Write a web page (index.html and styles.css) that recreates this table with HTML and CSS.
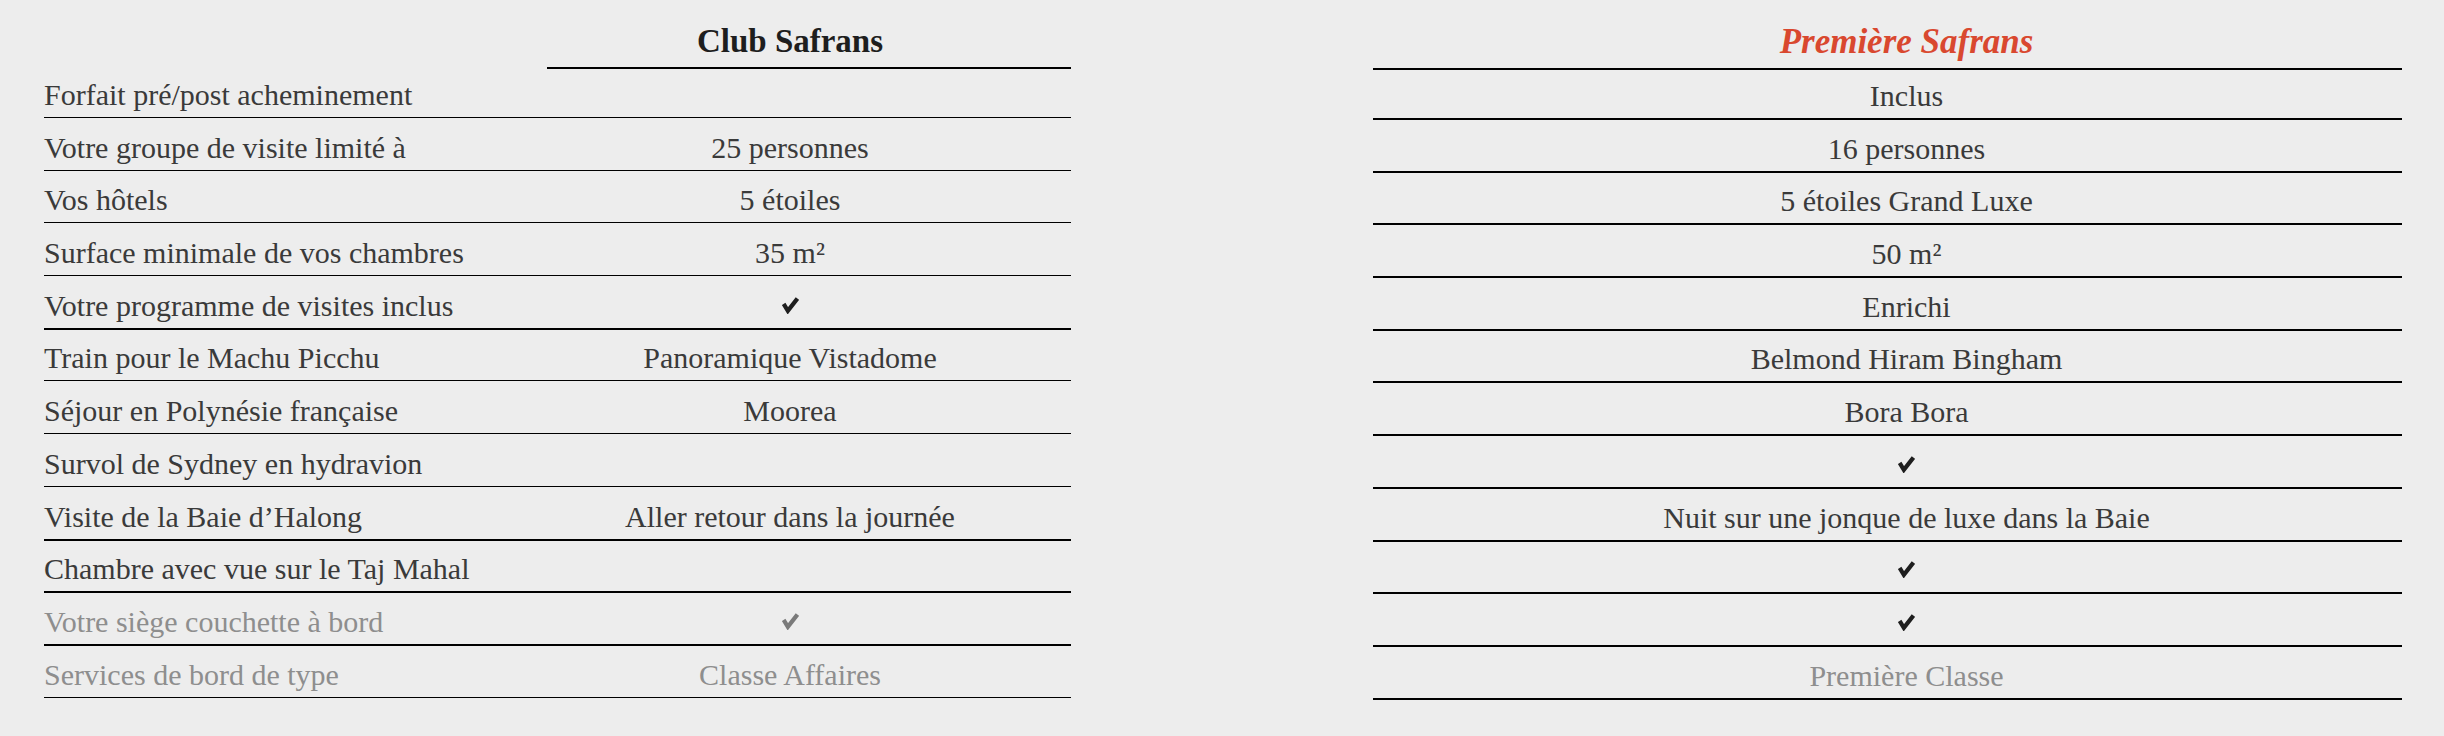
FILE: index.html
```html
<!DOCTYPE html>
<html lang="fr">
<head>
<meta charset="utf-8">
<title>Comparatif Club Safrans / Première Safrans</title>
<link rel="stylesheet" href="styles.css">
</head>
<body>
<main class="compare">
  <section class="left">
    <div class="lhead">
      <div></div>
      <div class="title club">Club Safrans</div>
    </div>
    <div class="lrow first"><div class="label">Forfait pré/post acheminement</div><div class="val"></div></div>
    <div class="lrow"><div class="label">Votre groupe de visite limité à</div><div class="val">25 personnes</div></div>
    <div class="lrow"><div class="label">Vos hôtels</div><div class="val">5 étoiles</div></div>
    <div class="lrow"><div class="label">Surface minimale de vos chambres</div><div class="val">35 m²</div></div>
    <div class="lrow thick"><div class="label">Votre programme de visites inclus</div><div class="val"><svg class="check" viewBox="0 0 16 16"><polyline points="1.5,6.5 5.5,13 14.5,1.5"/></svg></div></div>
    <div class="lrow"><div class="label">Train pour le Machu Picchu</div><div class="val">Panoramique Vistadome</div></div>
    <div class="lrow"><div class="label">Séjour en Polynésie française</div><div class="val">Moorea</div></div>
    <div class="lrow"><div class="label">Survol de Sydney en hydravion</div><div class="val"></div></div>
    <div class="lrow thick"><div class="label">Visite de la Baie d’Halong</div><div class="val">Aller retour dans la journée</div></div>
    <div class="lrow thick"><div class="label">Chambre avec vue sur le Taj Mahal</div><div class="val"></div></div>
    <div class="lrow thick muted"><div class="label">Votre siège couchette à bord</div><div class="val"><svg class="check" viewBox="0 0 16 16"><polyline points="1.5,6.5 5.5,13 14.5,1.5"/></svg></div></div>
    <div class="lrow muted"><div class="label">Services de bord de type</div><div class="val">Classe Affaires</div></div>
  </section>

  <section class="right">
    <div class="rhead"><div class="title premiere">Première Safrans</div></div>
    <div class="rrow first">Inclus</div>
    <div class="rrow">16 personnes</div>
    <div class="rrow">5 étoiles Grand Luxe</div>
    <div class="rrow">50 m²</div>
    <div class="rrow">Enrichi</div>
    <div class="rrow">Belmond Hiram Bingham</div>
    <div class="rrow">Bora Bora</div>
    <div class="rrow"><svg class="check" viewBox="0 0 16 16"><polyline points="1.5,6.5 5.5,13 14.5,1.5"/></svg></div>
    <div class="rrow">Nuit sur une jonque de luxe dans la Baie</div>
    <div class="rrow"><svg class="check" viewBox="0 0 16 16"><polyline points="1.5,6.5 5.5,13 14.5,1.5"/></svg></div>
    <div class="rrow"><svg class="check" viewBox="0 0 16 16"><polyline points="1.5,6.5 5.5,13 14.5,1.5"/></svg></div>
    <div class="rrow muted">Première Classe</div>
  </section>
</main>
</body>
</html>
```

FILE: styles.css
```css
html, body {
  margin: 0;
  padding: 0;
  background: #ededed;
}

body {
  font-family: "Liberation Serif", "Times New Roman", serif;
  color: #3a3a3a;
}

.compare {
  display: grid;
  grid-template-columns: 1027px 1029px;
  column-gap: 302px;
  padding-left: 44px;
  align-items: start;
}

.title {
  font-weight: bold;
  font-size: 33px;
  line-height: 40px;
  text-align: center;
  padding: 21px 0 6px;
  border-bottom: 2px solid #000;
}

.club {
  color: #1e1e1e;
  padding-right: 38px;
}

.premiere {
  color: #d9482f;
  font-style: italic;
  font-size: 35px;
}

.lhead {
  display: grid;
  grid-template-columns: 503px 524px;
}

.lrow {
  display: grid;
  grid-template-columns: 503px 524px;
  font-size: 30px;
  line-height: 36px;
  padding: 11.7px 0 4px;
  border-bottom: 1px solid #000;
}

.lrow.first {
  padding-top: 8px;
}

.lrow.thick {
  box-shadow: 0 1px 0 #000;
}

.lrow .val {
  text-align: center;
  padding-right: 38px;
}

.right {
  padding-top: 1px;
}

.rhead .title {
  padding-left: 38px;
}

.rrow {
  font-size: 30px;
  line-height: 36px;
  padding: 10.7px 0 4px 38px;
  text-align: center;
  border-bottom: 2px solid #000;
}

.rrow.first {
  padding-top: 8px;
}

.muted,
.muted .label,
.muted .val {
  color: #8e8e8e;
}

.check {
  display: inline-block;
  width: 17px;
  height: 17px;
  vertical-align: 2px;
  fill: none;
  stroke: #1e1e1e;
  stroke-width: 4;
  stroke-linejoin: miter;
  stroke-linecap: butt;
}

.muted .check {
  stroke: #7a7a7a;
}
```
